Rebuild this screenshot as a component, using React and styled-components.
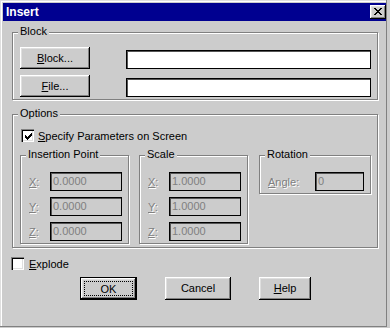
import React from 'react';
import styled, { createGlobalStyle, css } from 'styled-components';

const GlobalStyle = createGlobalStyle`
  html, body { margin: 0; padding: 0; background: #cccccc; }
  body { font-family: "Liberation Sans", Arial, sans-serif; font-size: 11px; color: #000; }
  * { box-sizing: border-box; }
`;

const Window = styled.div`
  width: 387px;
  height: 327px;
  background: #cccccc;
  border-right: 1px solid #808080;
  border-bottom: 1px solid #808080;
  box-shadow: inset 1px 1px 0 #dfdfdf, inset 2px 2px 0 #ffffff;
  padding: 3px 0 0 3px;
  display: flex;
  flex-direction: column;
`;

const TitleBar = styled.div`
  height: 18px;
  background: #000090;
  display: flex;
  align-items: center;
  justify-content: space-between;
  padding: 0 0 0 3px;
`;

const Title = styled.span`
  color: #fff;
  font-weight: bold;
  font-size: 12px;
  line-height: 18px;
`;

const CloseButton = styled.div`
  width: 16px;
  height: 14px;
  background: #cccccc;
  box-shadow: inset -1px -1px 0 #000, inset 1px 1px 0 #fff, inset -2px -2px 0 #808080, inset 2px 2px 0 #dfdfdf;
  display: flex;
  align-items: center;
  justify-content: center;
  padding: 0 1px 1px 0;
`;

const Content = styled.div`
  padding-left: 9px;
  display: flex;
  flex-direction: column;
`;

const Group = styled.div`
  position: relative;
  border: 1px solid #808080;
  box-shadow: 1px 1px 0 #fff, inset 1px 1px 0 #fff;
  width: ${p => p.$w}px;
  height: ${p => p.$h}px;
  padding: ${p => p.$pad};
  margin-top: ${p => p.$mt || 0}px;
  display: flex;
  flex-direction: column;
  flex-shrink: 0;
`;

const Legend = styled.span`
  position: absolute;
  top: -8px;
  left: 5px;
  padding: 0 2px;
  background: #cccccc;
  line-height: 13px;
  white-space: nowrap;
`;

const BlockRow = styled.div`
  display: flex;
  align-items: flex-end;
  gap: 36px;
  & + & { margin-top: 6px; }
`;

const raised = css`
  background: #cccccc;
  border: none;
  padding: 0;
  font: inherit;
  color: #000;
  box-shadow: inset -1px -1px 0 #000, inset 1px 1px 0 #fff, inset -2px -2px 0 #808080, inset 2px 2px 0 #dfdfdf;
`;

const Button = styled.button`
  ${raised}
  width: ${p => p.$w}px;
  height: ${p => p.$h || 22}px;
  display: flex;
  align-items: center;
  justify-content: center;
  padding-bottom: 1px;
  cursor: default;
`;

const DefaultButton = styled.button`
  width: ${p => p.$w}px;
  height: 23px;
  padding: 0;
  border: 1px solid #000;
  background: #cccccc;
  font: inherit;
  display: flex;
`;

const DefaultInner = styled.span`
  flex: 1;
  ${raised}
  display: flex;
  padding: 3px;
`;

const FocusRect = styled.span`
  flex: 1;
  border: 1px dotted #000;
  display: flex;
  align-items: center;
  justify-content: center;
`;

const TextField = styled.div`
  width: ${p => p.$w}px;
  height: 19px;
  background: ${p => (p.$disabled ? '#cccccc' : '#fff')};
  border: 1px solid #000;
  box-shadow: inset 1px 1px 0 #555;
  color: #808080;
  line-height: 17px;
  padding-left: 2px;
`;

const Key = styled.span`
  text-decoration: underline;
  text-underline-offset: 1px;
`;

const CheckRow = styled.label`
  display: flex;
  align-items: center;
  gap: ${p => p.$gap}px;
  margin-left: ${p => p.$ml || 0}px;
  margin-top: ${p => p.$mt || 0}px;
  height: 13px;
`;

const CheckBox = styled.span`
  width: 13px;
  height: 13px;
  background: #fff;
  box-shadow: inset 1px 1px 0 #808080, inset 2px 2px 0 #000, inset -1px -1px 0 #fff, inset -2px -2px 0 #dfdfdf;
  display: flex;
  align-items: center;
  justify-content: center;
  padding: 1px 0 0 1px;
`;

const SubRow = styled.div`
  display: flex;
  align-items: flex-start;
  gap: 10px;
  margin-top: 13px;
`;

const FieldRow = styled.div`
  display: flex;
  align-items: center;
  & + & { margin-top: 6px; }
`;

const DisabledLabel = styled.span`
  width: ${p => p.$w}px;
  color: #808080;
  text-shadow: 1px 1px 0 #fff;
  flex-shrink: 0;
`;

const ButtonRow = styled.div`
  display: flex;
  gap: 28px;
  margin: 7px 0 0 77px;
  align-items: flex-start;
`;

const CloseGlyph = () => (
  <svg width="8" height="7" viewBox="0 0 8 7" shapeRendering="crispEdges">
    <g fill="#000">
      <rect x="0" y="0" width="2" height="1" />
      <rect x="6" y="0" width="2" height="1" />
      <rect x="1" y="1" width="2" height="1" />
      <rect x="5" y="1" width="2" height="1" />
      <rect x="2" y="2" width="4" height="1" />
      <rect x="3" y="3" width="2" height="1" />
      <rect x="2" y="4" width="4" height="1" />
      <rect x="1" y="5" width="2" height="1" />
      <rect x="5" y="5" width="2" height="1" />
      <rect x="0" y="6" width="2" height="1" />
      <rect x="6" y="6" width="2" height="1" />
    </g>
  </svg>
);

const CheckGlyph = () => (
  <svg width="7" height="7" viewBox="0 0 7 7" shapeRendering="crispEdges">
    <g fill="#000">
      <rect x="6" y="0" width="1" height="1" />
      <rect x="5" y="1" width="2" height="1" />
      <rect x="0" y="2" width="1" height="1" />
      <rect x="4" y="2" width="3" height="1" />
      <rect x="0" y="3" width="2" height="1" />
      <rect x="3" y="3" width="3" height="1" />
      <rect x="0" y="4" width="5" height="1" />
      <rect x="1" y="5" width="3" height="1" />
      <rect x="2" y="6" width="1" height="1" />
    </g>
  </svg>
);

const AxisFields = ({ value }) => (
  <>
    {['X', 'Y', 'Z'].map(a => (
      <FieldRow key={a}>
        <DisabledLabel $w={21}><Key>{a}</Key>:</DisabledLabel>
        <TextField $w={72} $disabled>{value}</TextField>
      </FieldRow>
    ))}
  </>
);

export default function App() {
  return (
    <>
      <GlobalStyle />
      <Window>
        <TitleBar>
          <Title>Insert</Title>
          <CloseButton><CloseGlyph /></CloseButton>
        </TitleBar>
        <Content>
          <Group $w={366} $h={68} $mt={11} $pad="14px 0 0 7px">
            <Legend>Block</Legend>
            <BlockRow>
              <Button $w={70}><span><Key>B</Key>lock...</span></Button>
              <TextField $w={245} />
            </BlockRow>
            <BlockRow>
              <Button $w={70}><span><Key>F</Key>ile...</span></Button>
              <TextField $w={245} />
            </BlockRow>
          </Group>

          <Group $w={366} $h={134} $mt={14} $pad="14px 0 0 7px">
            <Legend>Options</Legend>
            <CheckRow $gap={4} $ml={1}>
              <CheckBox><CheckGlyph /></CheckBox>
              <span><Key>S</Key>pecify Parameters on Screen</span>
            </CheckRow>
            <SubRow>
              <Group $w={109} $h={89} $pad="16px 0 0 8px">
                <Legend>Insertion Point</Legend>
                <AxisFields value="0.0000" />
              </Group>
              <Group $w={109} $h={89} $pad="16px 0 0 8px">
                <Legend>Scale</Legend>
                <AxisFields value="1.0000" />
              </Group>
              <Group $w={112} $h={39} $pad="16px 0 0 8px" style={{ marginLeft: 1 }}>
                <Legend>Rotation</Legend>
                <FieldRow>
                  <DisabledLabel $w={47}><Key>A</Key>ngle:</DisabledLabel>
                  <TextField $w={49} $disabled>0</TextField>
                </FieldRow>
              </Group>
            </SubRow>
          </Group>
        </Content>

        <CheckRow $gap={5} $ml={8} $mt={9}>
          <CheckBox />
          <span><Key>E</Key>xplode</span>
        </CheckRow>

        <ButtonRow>
          <DefaultButton $w={57}>
            <DefaultInner><FocusRect>OK</FocusRect></DefaultInner>
          </DefaultButton>
          <Button $w={66} $h={23}>Cancel</Button>
          <Button $w={52} $h={23}><span><Key>H</Key>elp</span></Button>
        </ButtonRow>
      </Window>
    </>
  );
}
